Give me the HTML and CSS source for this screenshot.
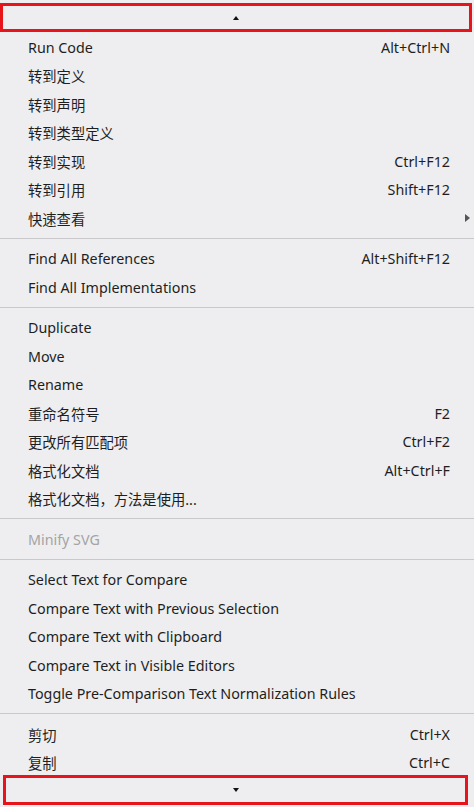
FILE: index.html
```html
<!DOCTYPE html>
<html lang="zh-CN">
<head>
  <meta charset="UTF-8">
  <meta name="viewport" content="width=device-width, initial-scale=1.0">
  <title>Context Menu</title>
  <link rel="stylesheet" href="styles.css">
</head>
<body>

<!-- SCROLL UP -->
<div class="scroller scroller-up"><span class="tri-up"></span></div>

<div class="menu">
  <div class="item"><span class="label">Run Code</span><span class="key">Alt+Ctrl+N</span></div>
  <div class="item"><span class="label">转到定义</span></div>
  <div class="item"><span class="label">转到声明</span></div>
  <div class="item"><span class="label">转到类型定义</span></div>
  <div class="item"><span class="label">转到实现</span><span class="key">Ctrl+F12</span></div>
  <div class="item"><span class="label">转到引用</span><span class="key">Shift+F12</span></div>
  <div class="item submenu"><span class="label">快速查看</span><span class="arrow"></span></div>
  <div class="sep"></div>
  <div class="item"><span class="label">Find All References</span><span class="key">Alt+Shift+F12</span></div>
  <div class="item"><span class="label">Find All Implementations</span></div>
  <div class="sep"></div>
  <div class="item"><span class="label">Duplicate</span></div>
  <div class="item"><span class="label">Move</span></div>
  <div class="item"><span class="label">Rename</span></div>
  <div class="item"><span class="label">重命名符号</span><span class="key">F2</span></div>
  <div class="item"><span class="label">更改所有匹配项</span><span class="key">Ctrl+F2</span></div>
  <div class="item"><span class="label">格式化文档</span><span class="key">Alt+Ctrl+F</span></div>
  <div class="item"><span class="label">格式化文档，方法是使用...</span></div>
  <div class="sep"></div>
  <div class="item disabled"><span class="label">Minify SVG</span></div>
  <div class="sep"></div>
  <div class="item"><span class="label">Select Text for Compare</span></div>
  <div class="item"><span class="label">Compare Text with Previous Selection</span></div>
  <div class="item"><span class="label">Compare Text with Clipboard</span></div>
  <div class="item"><span class="label">Compare Text in Visible Editors</span></div>
  <div class="item"><span class="label">Toggle Pre-Comparison Text Normalization Rules</span></div>
  <div class="sep"></div>
  <div class="item"><span class="label">剪切</span><span class="key">Ctrl+X</span></div>
  <div class="item"><span class="label">复制</span><span class="key">Ctrl+C</span></div>
</div>

<!-- SCROLL DOWN -->
<div class="scroller scroller-down"><span class="tri-down"></span></div>

</body>
</html>
```

FILE: styles.css
```css
body {
  margin: 0;
  padding: 0;
  background: #eeeef0;
  color: #1e1e1e;
  font-family: "Noto Sans", "Noto Sans CJK SC", sans-serif;
  font-size: 14.3px;
  height: 807px;
  overflow: hidden;
}

/* SCROLL ARROWS */
.scroller {
  height: 23px;
  border: 3px solid #e8141b;
  display: flex;
  align-items: center;
  justify-content: center;
  background: #eeeef0;
}
.scroller-up { margin: 3px 2px 0 0; }
.scroller-down {
  position: fixed;
  left: 3px;
  right: 6px;
  bottom: 2px;
  height: 24px;
}
.tri-up {
  width: 0; height: 0;
  border-left: 3px solid transparent;
  border-right: 3px solid transparent;
  border-bottom: 4px solid #111;
}
.tri-down {
  width: 0; height: 0;
  border-left: 3px solid transparent;
  border-right: 3px solid transparent;
  border-top: 4px solid #111;
}

/* MENU ITEMS */
.menu { padding-top: 1px; }
.item {
  height: 28.5px;
  display: flex;
  align-items: center;
  justify-content: space-between;
  padding: 0 24px 0 28px;
  white-space: nowrap;
}
.item .key { color: #1e1e1e; }
.item.disabled { color: #a4a4a6; }
.item.submenu { padding-right: 4px; }
.arrow {
  width: 0; height: 0;
  border-top: 4px solid transparent;
  border-bottom: 4px solid transparent;
  border-left: 5px solid #555;
}
.sep {
  height: 0;
  border-top: 1px solid #c9c9cc;
  margin: 5px 0 6px;
}
```
